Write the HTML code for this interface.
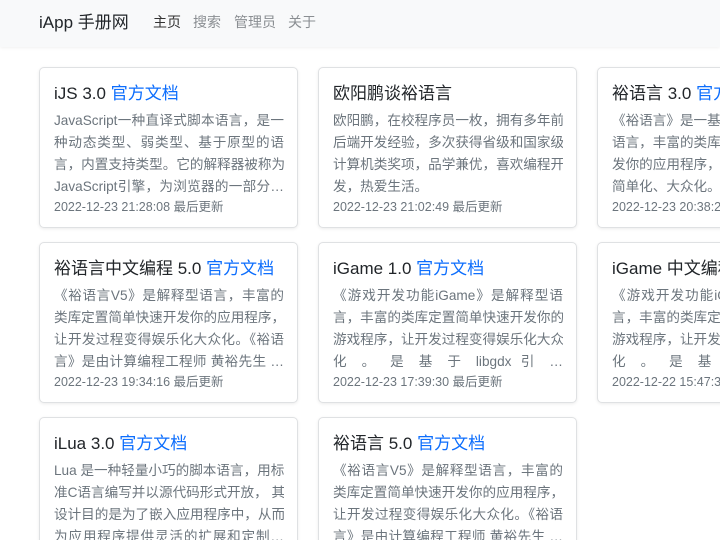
<!DOCTYPE html>
<html><head><meta charset="utf-8"><style>
*{margin:0;padding:0;box-sizing:border-box}
html,body{width:720px;height:540px;overflow:hidden}
body{background:#fff;font-family:"Liberation Sans","Noto Sans CJK SC",sans-serif;color:#212529;position:relative}
.nav{position:absolute;left:0;top:0;width:720px;height:47px;background:#f8f9fa;box-shadow:0 1px 3px rgba(0,0,0,.06)}
.brand{position:absolute;left:39px;top:8px;font-size:17px;color:#212529}
.nl{position:absolute;top:12px;font-size:14px;color:#8a8e92}
.card{position:absolute;width:259px;height:161px;border:1px solid #dfe1e3;border-radius:5px;box-shadow:0 1px 3px rgba(0,0,0,.08);background:#fff;overflow:hidden}
.t{position:absolute;left:14px;top:11px;font-size:17px;white-space:nowrap}
.t a{color:#0d6efd;text-decoration:none}
.b{position:absolute;left:14px;top:42px;width:230px;font-size:13.6px;color:#6c757d;line-height:22px}
.b div{white-space:nowrap;overflow:hidden;text-align:justify;text-align-last:justify}
.d{position:absolute;left:14px;top:128px;font-size:12.5px;color:#6c757d;white-space:nowrap}
</style></head><body>
<div class="nav"><span class="brand">iApp 手册网</span>
<span class="nl" style="left:153px;color:#333">主页</span>
<span class="nl" style="left:193px">搜索</span>
<span class="nl" style="left:234px">管理员</span>
<span class="nl" style="left:288px">关于</span></div>

<div class="card" style="left:39px;top:67px"><div class="t">iJS 3.0 <a>官方文档</a></div>
<div class="b"><div>JavaScript一种直译式脚本语言，是一</div><div>种动态类型、弱类型、基于原型的语</div><div>言，内置支持类型。它的解释器被称为</div><div>JavaScript引擎，为浏览器的一部分…</div></div>
<div class="d">2022-12-23 21:28:08 最后更新</div></div>

<div class="card" style="left:318px;top:67px"><div class="t">欧阳鹏谈裕语言</div>
<div class="b"><div>欧阳鹏，在校程序员一枚，拥有多年前</div><div>后端开发经验，多次获得省级和国家级</div><div>计算机类奖项，品学兼优，喜欢编程开</div><div style="text-align-last:left">发，热爱生活。</div></div>
<div class="d">2022-12-23 21:02:49 最后更新</div></div>

<div class="card" style="left:597px;top:67px"><div class="t">裕语言 3.0 <a>官方文档</a></div>
<div class="b"><div>《裕语言》是一基于原型的解释型编程</div><div>语言，丰富的类库定置简单快速开发你</div><div>发你的应用程序，让开发过程变得更加</div><div style="text-align-last:left">简单化、大众化。</div></div>
<div class="d">2022-12-23 20:38:21 最后更新</div></div>

<div class="card" style="left:39px;top:242px"><div class="t">裕语言中文编程 5.0 <a>官方文档</a></div>
<div class="b"><div>《裕语言V5》是解释型语言，丰富的</div><div>类库定置简单快速开发你的应用程序，</div><div>让开发过程变得娱乐化大众化。《裕语</div><div>言》是由计算编程工程师 黄裕先生 …</div></div>
<div class="d">2022-12-23 19:34:16 最后更新</div></div>

<div class="card" style="left:318px;top:242px"><div class="t">iGame 1.0 <a>官方文档</a></div>
<div class="b"><div>《游戏开发功能iGame》是解释型语</div><div>言，丰富的类库定置简单快速开发你的</div><div>游戏程序，让开发过程变得娱乐化大众</div><div>化 。 是 基 于 libgdx 引 …</div></div>
<div class="d">2022-12-23 17:39:30 最后更新</div></div>

<div class="card" style="left:597px;top:242px"><div class="t">iGame 中文编程 <a>官方文档</a></div>
<div class="b"><div>《游戏开发功能iGame》是解释型语</div><div>言，丰富的类库定置简单快速开发你的</div><div>游戏程序，让开发过程变得娱乐化大众</div><div>化 。 是 基 于 libgdx 引 …</div></div>
<div class="d">2022-12-22 15:47:30 最后更新</div></div>

<div class="card" style="left:39px;top:417px"><div class="t">iLua 3.0 <a>官方文档</a></div>
<div class="b"><div>Lua 是一种轻量小巧的脚本语言，用标</div><div>准C语言编写并以源代码形式开放， 其</div><div>设计目的是为了嵌入应用程序中，从而</div><div>为应用程序提供灵活的扩展和定制…</div></div>
<div class="d">2022-12-23 17:00:00 最后更新</div></div>

<div class="card" style="left:318px;top:417px"><div class="t">裕语言 5.0 <a>官方文档</a></div>
<div class="b"><div>《裕语言V5》是解释型语言，丰富的</div><div>类库定置简单快速开发你的应用程序，</div><div>让开发过程变得娱乐化大众化。《裕语</div><div>言》是由计算编程工程师 黄裕先生 …</div></div>
<div class="d">2022-12-23 17:00:00 最后更新</div></div>
</body></html>
